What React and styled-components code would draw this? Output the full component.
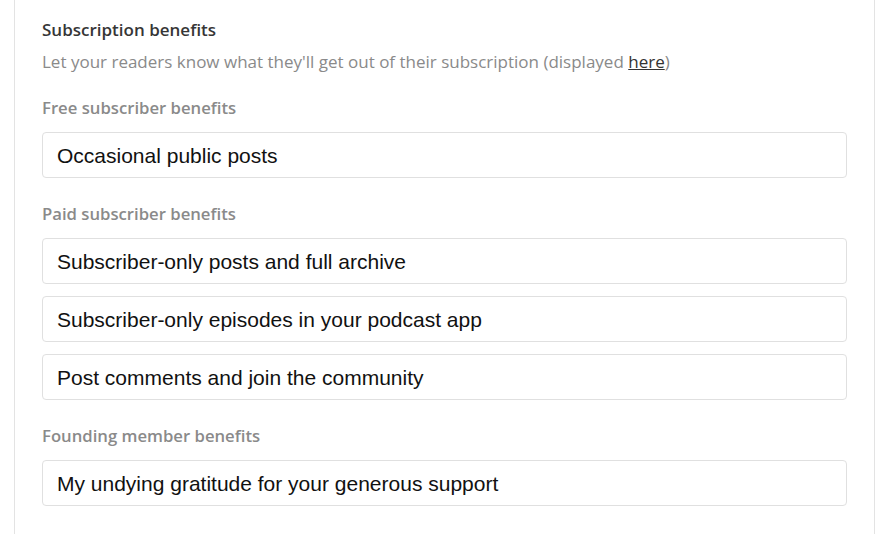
import React from "react";
import styled, { createGlobalStyle } from "styled-components";

const Global = createGlobalStyle`
  html, body { margin: 0; padding: 0; background: #ffffff; }
  body { font-family: "Open Sans", "Noto Sans", sans-serif; }
`;

const Page = styled.div`
  padding: 0 12px 0 14px;
  height: 534px;
  overflow: hidden;
`;

const Panel = styled.section`
  border-left: 1px solid #e3e3e3;
  border-right: 1px solid #e3e3e3;
  padding: 18px 27px 40px 27px;
  min-height: 600px;
  box-sizing: border-box;
`;

const Title = styled.h2`
  margin: 0;
  font-family: "Open Sans", sans-serif;
  font-size: 17px;
  font-weight: 600;
  color: #363636;
  line-height: 24px;
`;

const Description = styled.p`
  margin: 8px 0 0 0;
  font-family: "Open Sans", sans-serif;
  font-size: 17px;
  color: #8a8a8a;
  line-height: 24px;
  a { color: #333; text-decoration: underline; }
`;

const Group = styled.div`
  margin-top: ${(p) => p.$top}px;
  display: flex;
  flex-direction: column;
`;

const Label = styled.div`
  font-family: "Open Sans", sans-serif;
  font-size: 16.7px;
  font-weight: 600;
  color: #8a8a8a;
  line-height: 24px;
  margin-bottom: 12px;
`;

const Inputs = styled.div`
  display: flex;
  flex-direction: column;
  gap: 12px;
`;

const Field = styled.input`
  box-sizing: border-box;
  width: 100%;
  height: 46px;
  border: 1px solid #e0e0e0;
  border-radius: 4px;
  padding: 2px 14px 0 14px;
  font-family: "Liberation Sans", Arial, sans-serif;
  font-size: 21px;
  color: #111;
  background: #fff;
  outline: none;
`;

const groups = [
  { label: "Free subscriber benefits", top: 22, items: ["Occasional public posts"] },
  {
    label: "Paid subscriber benefits",
    top: 24,
    items: [
      "Subscriber-only posts and full archive",
      "Subscriber-only episodes in your podcast app",
      "Post comments and join the community",
    ],
  },
  { label: "Founding member benefits", top: 24, items: ["My undying gratitude for your generous support"] },
];

export default function App() {
  return (
    <>
      <Global />
      <Page>
        <Panel>
          <Title>Subscription benefits</Title>
          <Description>
            Let your readers know what they'll get out of their subscription (displayed <a href="#">here</a>)
          </Description>
          {groups.map((g) => (
            <Group key={g.label} $top={g.top}>
              <Label>{g.label}</Label>
              <Inputs>
                {g.items.map((it) => (
                  <Field key={it} defaultValue={it} />
                ))}
              </Inputs>
            </Group>
          ))}
        </Panel>
      </Page>
    </>
  );
}
